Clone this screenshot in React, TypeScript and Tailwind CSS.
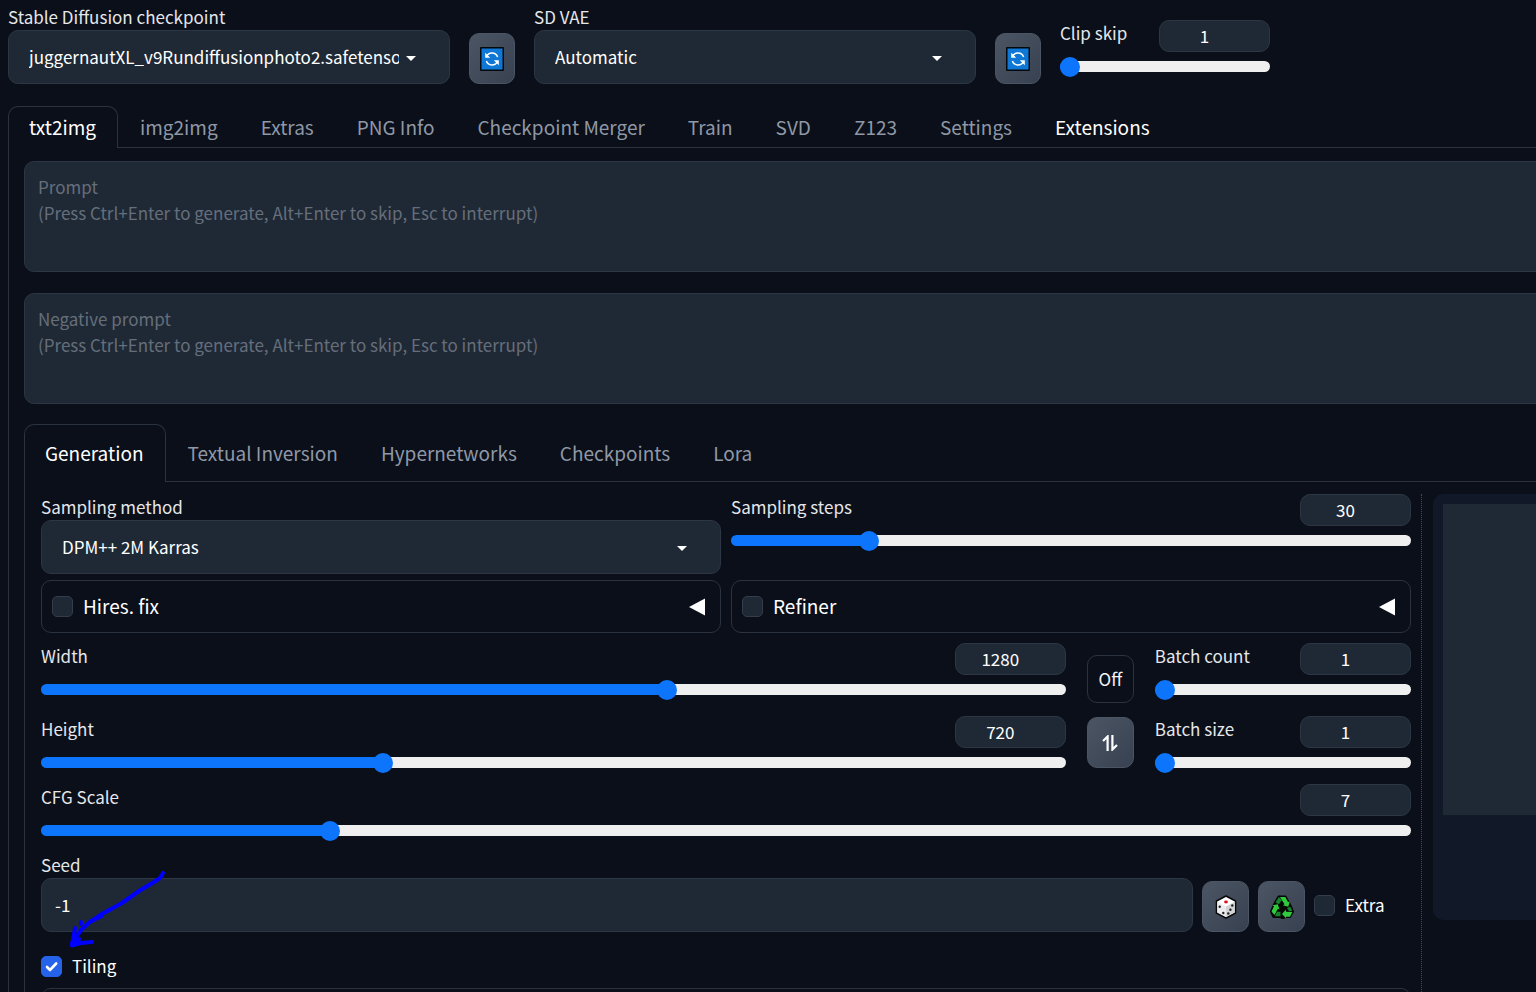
import { useId, useState } from 'react'
import type { ReactNode } from 'react'

const MAIN_TABS = ['txt2img', 'img2img', 'Extras', 'PNG Info', 'Checkpoint Merger', 'Train', 'SVD', 'Z123', 'Settings', 'Extensions']
const SUB_TABS = ['Generation', 'Textual Inversion', 'Hypernetworks', 'Checkpoints', 'Lora']

interface TabsProps {
  items: string[]
  size: string
  highlight?: string
}

function Tabs({ items, size, highlight }: TabsProps) {
  const [active, setActive] = useState(items[0])

  return (
    <div role="tablist" className={`flex text-[19px] whitespace-nowrap ${size}`}>
      {items.map((item) => (
        <button
          key={item}
          type="button"
          role="tab"
          aria-selected={item === active}
          onClick={() => setActive(item)}
          className={
            item === active
              ? 'pl-5 pr-[21px] rounded-t-[10px] border border-b-0 border-[#2b3340] text-white'
              : `pl-[22px] pr-[21px] pt-px border-b border-[#2b3340] ${item === highlight ? 'text-white' : 'text-[#8f98a6]'}`
          }
        >
          {item}
        </button>
      ))}
      <div className="flex-1 border-b border-[#2b3340]" />
    </div>
  )
}

interface SelectFieldProps {
  label: string
  options: string[]
  className?: string
}

function SelectField({ label, options, className = '' }: SelectFieldProps) {
  const id = useId()
  return (
    <div className={className}>
      <label htmlFor={id} className="block leading-[26px] text-[#e5e7eb]">{label}</label>
      <div className="relative">
        <select
          id={id}
          className="block w-full h-[54px] pl-5 pr-[50px] appearance-none rounded-[10px] border border-[#2d3644] bg-[#1f2935] text-white"
        >
          {options.map((option) => <option key={option}>{option}</option>)}
        </select>
        <svg className="absolute right-[33px] top-[25px] w-3 h-3 pointer-events-none" viewBox="0 0 12 12" fill="#fff" aria-hidden="true">
          <path d="M1 1h10L6 6z" />
        </svg>
      </div>
    </div>
  )
}

interface SliderFieldProps {
  label: string
  value: number
  min: number
  max: number
  className?: string
}

function SliderField({ label, value, min, max, className = '' }: SliderFieldProps) {
  const id = useId()
  const [current, setCurrent] = useState(value)
  const ratio = (current - min) / (max - min)
  const stop = `calc(${ratio * 100}% + ${10 - ratio * 20}px)`

  return (
    <div className={className}>
      <div className="flex items-start justify-between">
        <label htmlFor={id} className="leading-[26px] text-[#e5e7eb]">{label}</label>
        <input
          type="number"
          aria-label={`${label} value`}
          value={current}
          min={min}
          max={max}
          onChange={(e) => setCurrent(Number(e.target.value))}
          className="w-[111px] h-8 pr-5 pb-[2px] text-center appearance-none [&::-webkit-inner-spin-button]:appearance-none rounded-[10px] border border-[#2d3644] bg-[#1f2935] text-white"
        />
      </div>
      <input
        id={id}
        type="range"
        value={current}
        min={min}
        max={max}
        onChange={(e) => setCurrent(Number(e.target.value))}
        className="block w-full h-[11px] mt-[9px] appearance-none rounded-full [&::-webkit-slider-thumb]:appearance-none [&::-webkit-slider-thumb]:w-5 [&::-webkit-slider-thumb]:h-5 [&::-webkit-slider-thumb]:rounded-full [&::-webkit-slider-thumb]:bg-[#0d75fc]"
        style={{ background: `linear-gradient(to right, #0d75fc ${stop}, #efefef ${stop})` }}
      />
    </div>
  )
}

interface CheckboxProps {
  label: string
  checked?: boolean
  className?: string
}

function Checkbox({ label, checked = false, className = '' }: CheckboxProps) {
  return (
    <label className={`flex items-center gap-[10px] text-white ${className}`}>
      <span className="relative block w-[21px] h-[21px]">
        <input
          type="checkbox"
          defaultChecked={checked}
          className="peer block w-full h-full appearance-none rounded-[5px] border border-[#333d4b] bg-[#1f2935] checked:bg-[#2563eb] checked:border-[#2563eb]"
        />
        <svg className="absolute inset-0 hidden peer-checked:block pointer-events-none" viewBox="0 0 21 21" fill="none" stroke="#fff" strokeWidth="2.6" strokeLinecap="round" strokeLinejoin="round" aria-hidden="true">
          <path d="M6 11l3 3 6.200-6.500" />
        </svg>
      </span>
      {label}
    </label>
  )
}

function Accordion({ label }: { label: string }) {
  return (
    <div className="flex items-center justify-between h-[53px] pl-[10px] pr-[15px] rounded-[10px] border border-[#2b3340]">
      <Checkbox label={label} className="text-[19px]" />
      <button type="button" aria-label={`Expand ${label}`}>
        <svg className="w-4 h-[18px]" viewBox="0 0 16 18" fill="#fff" aria-hidden="true">
          <path d="M0 9L16 .5v17z" />
        </svg>
      </button>
    </div>
  )
}

function ToolButton({ label, children, className = 'w-[47px]' }: { label: string; children: ReactNode; className?: string }) {
  return (
    <button
      type="button"
      aria-label={label}
      className={`flex items-center justify-center shrink-0 h-[51px] rounded-[10px] border border-[#4b5563] bg-linear-to-br from-[#4b5563] to-[#374151] ${className}`}
    >
      {children}
    </button>
  )
}

function RefreshIcon() {
  return (
    <svg className="w-6 h-6" viewBox="0 0 24 24" fill="none" aria-hidden="true">
      <rect width="24" height="24" rx="1" fill="#05080c" />
      <rect x="1.500" y="1.500" width="21" height="21" fill="#0f78d7" />
      <path d="M6.500 9.500A6 6 0 0 1 17.600 10M17.500 14.500A6 6 0 0 1 6.400 14" stroke="#fff" strokeWidth="1.500" />
      <path d="M5.200 5.800v5h5zM18.800 18.200v-5h-5z" fill="#fff" />
    </svg>
  )
}

function DiceIcon() {
  return (
    <svg className="w-6 h-6" viewBox="0 0 24 24" aria-hidden="true">
      <path d="M12 1L21.500 6v12L12 23 2.500 18V6z" fill="#fff" stroke="#0a0a0a" strokeWidth="1.600" strokeLinejoin="round" />
      <path d="M12 11.500L20.700 6.800v10.800L12 22.100z" fill="#d4d4d6" />
      <path d="M12 11.500L3.300 6.800v10.800L12 22.100z" fill="#ececee" />
      <ellipse cx="12" cy="7" rx="1.900" ry="1.400" fill="#e01020" />
      <g fill="#222">
        <circle cx="5.700" cy="11.700" r="1.200" />
        <circle cx="9.300" cy="18" r="1.200" />
        <circle cx="18.300" cy="10.500" r="1.200" />
        <circle cx="14.300" cy="18.500" r="1.200" />
        <circle cx="16.400" cy="14.700" r="1.200" />
      </g>
    </svg>
  )
}

function RecycleIcon() {
  return (
    <svg className="w-6 h-6" viewBox="0 0 24 24" strokeLinejoin="round" aria-hidden="true">
      {/* dark silhouette under the three arrows */}
      <path d="M8.500 1.500h7l4.500 8 3 7-3 5.500h-4l-4 1.500-1-1.500H3.500L1 16.500 5 7.500z" fill="#050805" stroke="#050805" strokeWidth="2" />
      <g fill="#2fcb3c">
        <path d="M10 2h5.300l2.700 5 1.700-.4-1.400 5.200-5.500-1.600 1.700-1z" />
        <path d="M2.500 10.200l5.300-1 1.700 5.300-1.600-.8L4.500 20 1.500 16.500 4 11.300z" />
        <path d="M22.300 17L20 21.700h-4v1.500L12 19l4-4.400v2.200z" />
      </g>
      <g fill="#15842a">
        <path d="M8.800 2L5.500 7.600l3.300 1.600L12 5z" />
        <path d="M4.800 21.300l2.200-4.500h3.500v4.500z" />
        <path d="M20.200 11.500l2.200 4.500-3.200.3-2.200-3z" />
      </g>
    </svg>
  )
}

function PromptBox({ name }: { name: string }) {
  return (
    <textarea
      aria-label={name}
      placeholder={`${name}\n(Press Ctrl+Enter to generate, Alt+Enter to skip, Esc to interrupt)`}
      className="block w-[calc(100%+16px)] h-[111px] px-[13px] py-3 leading-[26px] resize-none rounded-[10px] border border-[#2d3644] bg-[#1f2935] text-white placeholder:text-[#666e7b]"
    />
  )
}

function SeedRow() {
  return (
    <div className="relative mt-4">
      <label htmlFor="seed" className="block leading-[26px] text-[#e5e7eb]">Seed</label>
      <div className="flex items-end gap-[9px]">
        <input
          id="seed"
          type="text"
          defaultValue="-1"
          className="flex-1 min-w-0 h-[54px] px-[13px] pb-[2px] rounded-[10px] border border-[#2d3644] bg-[#1f2935] text-white"
        />
        <ToolButton label="Random seed"><DiceIcon /></ToolButton>
        <ToolButton label="Reuse seed"><RecycleIcon /></ToolButton>
        <Checkbox label="Extra" className="self-center w-[97px]" />
      </div>
      {/* hand-drawn arrow pointing at Tiling */}
      <svg
        className="absolute left-6 top-4 w-[104px] h-[84px] pointer-events-none"
        viewBox="0 0 104 84"
        fill="none"
        stroke="#0000ff"
        strokeWidth="4"
        strokeLinecap="round"
        strokeLinejoin="round"
        aria-hidden="true"
      >
        <path d="M98 5l-1 2-2 3-6 4-15 9-17 12-20 11-12 8-8 7-6 8-4 7" />
        <path d="M37 48l-11 5M16 54v2" />
        <path d="M10 60l-3 17.500 9-2.500 11-1" />
        <path d="M9 68l-2 9 6-2 1-4" fill="#0000ff" />
      </svg>
    </div>
  )
}

function GenerationSettings() {
  return (
    <div className="flex-1 min-w-0">
      <div className="grid grid-cols-2 gap-x-[10px] gap-y-[6px]">
        <SelectField label="Sampling method" options={['DPM++ 2M Karras']} />
        <SliderField label="Sampling steps" value={30} min={1} max={150} />
        <Accordion label="Hires. fix" />
        <Accordion label="Refiner" />
      </div>

      <div className="grid grid-cols-[4fr_47px_1fr] gap-x-[21px] mt-[10px]">
        <div className="flex flex-col gap-[21px]">
          <SliderField label="Width" value={1280} min={64} max={2048} />
          <SliderField label="Height" value={720} min={64} max={2048} />
        </div>
        <div className="flex flex-col gap-[14px] pt-3">
          <button type="button" className="h-12 rounded-[10px] border border-[#2b3340] text-[#f3f4f6]">Off</button>
          <ToolButton label="Switch width and height">
            <svg className="w-4 h-4" viewBox="0 0 16 16" fill="none" stroke="#fff" strokeWidth="2.200" aria-hidden="true">
              <path d="M5.600 16V1.500L1 6M10.400 0v14.500L15 10" />
            </svg>
          </ToolButton>
        </div>
        <div className="flex flex-col gap-[21px]">
          <SliderField label="Batch count" value={1} min={1} max={100} />
          <SliderField label="Batch size" value={1} min={1} max={8} />
        </div>
      </div>

      <SliderField label="CFG Scale" value={7} min={1} max={30} className="mt-4" />
      <SeedRow />
      <Checkbox label="Tiling" checked className="h-6 mt-[22px]" />
      <div className="h-14 mt-[10px] rounded-[10px] border border-[#2b3340]" />
    </div>
  )
}

export default function App() {
  return (
    <div className="h-screen overflow-hidden pl-2 pt-1 bg-[#0b0f19] text-[17px] font-['Noto_Sans_CJK_SC','Noto_Sans',sans-serif]">
      <header className="flex items-end gap-[19px]">
        <SelectField
          label="Stable Diffusion checkpoint"
          options={['juggernautXL_v9Rundiffusionphoto2.safetensors [c9e3e68f89]']}
          className="w-[442px]"
        />
        <ToolButton label="Refresh checkpoints" className="w-[46px]"><RefreshIcon /></ToolButton>
        <SelectField label="SD VAE" options={['Automatic']} className="w-[442px]" />
        <ToolButton label="Refresh VAE list" className="w-[46px]"><RefreshIcon /></ToolButton>
        <SliderField label="Clip skip" value={1} min={1} max={12} className="w-[210px] pb-3" />
      </header>

      <main className="mt-[22px]">
        <Tabs items={MAIN_TABS} size="h-[42px]" highlight="Extensions" />
        <div className="pt-[13px] pl-[15px] border-l border-[#2b3340]">
          <div className="flex flex-col gap-[21px]">
            <PromptBox name="Prompt" />
            <PromptBox name="Negative prompt" />
          </div>

          <div className="mt-5">
            <Tabs items={SUB_TABS} size="h-[58px]" />
            <div className="flex pt-3 pl-4 border-l border-[#2b3340]">
              <GenerationSettings />
              <div className="w-px ml-[10px] mr-[11px] border-l border-dotted border-[#414b59]" />
              <div className="shrink-0 w-[103px] h-[426px] pt-[10px] pl-[10px] rounded-l-[10px] bg-[#111827]">
                <div className="h-[311px] bg-[#1f2935]" />
              </div>
            </div>
          </div>
        </div>
      </main>
    </div>
  )
}
